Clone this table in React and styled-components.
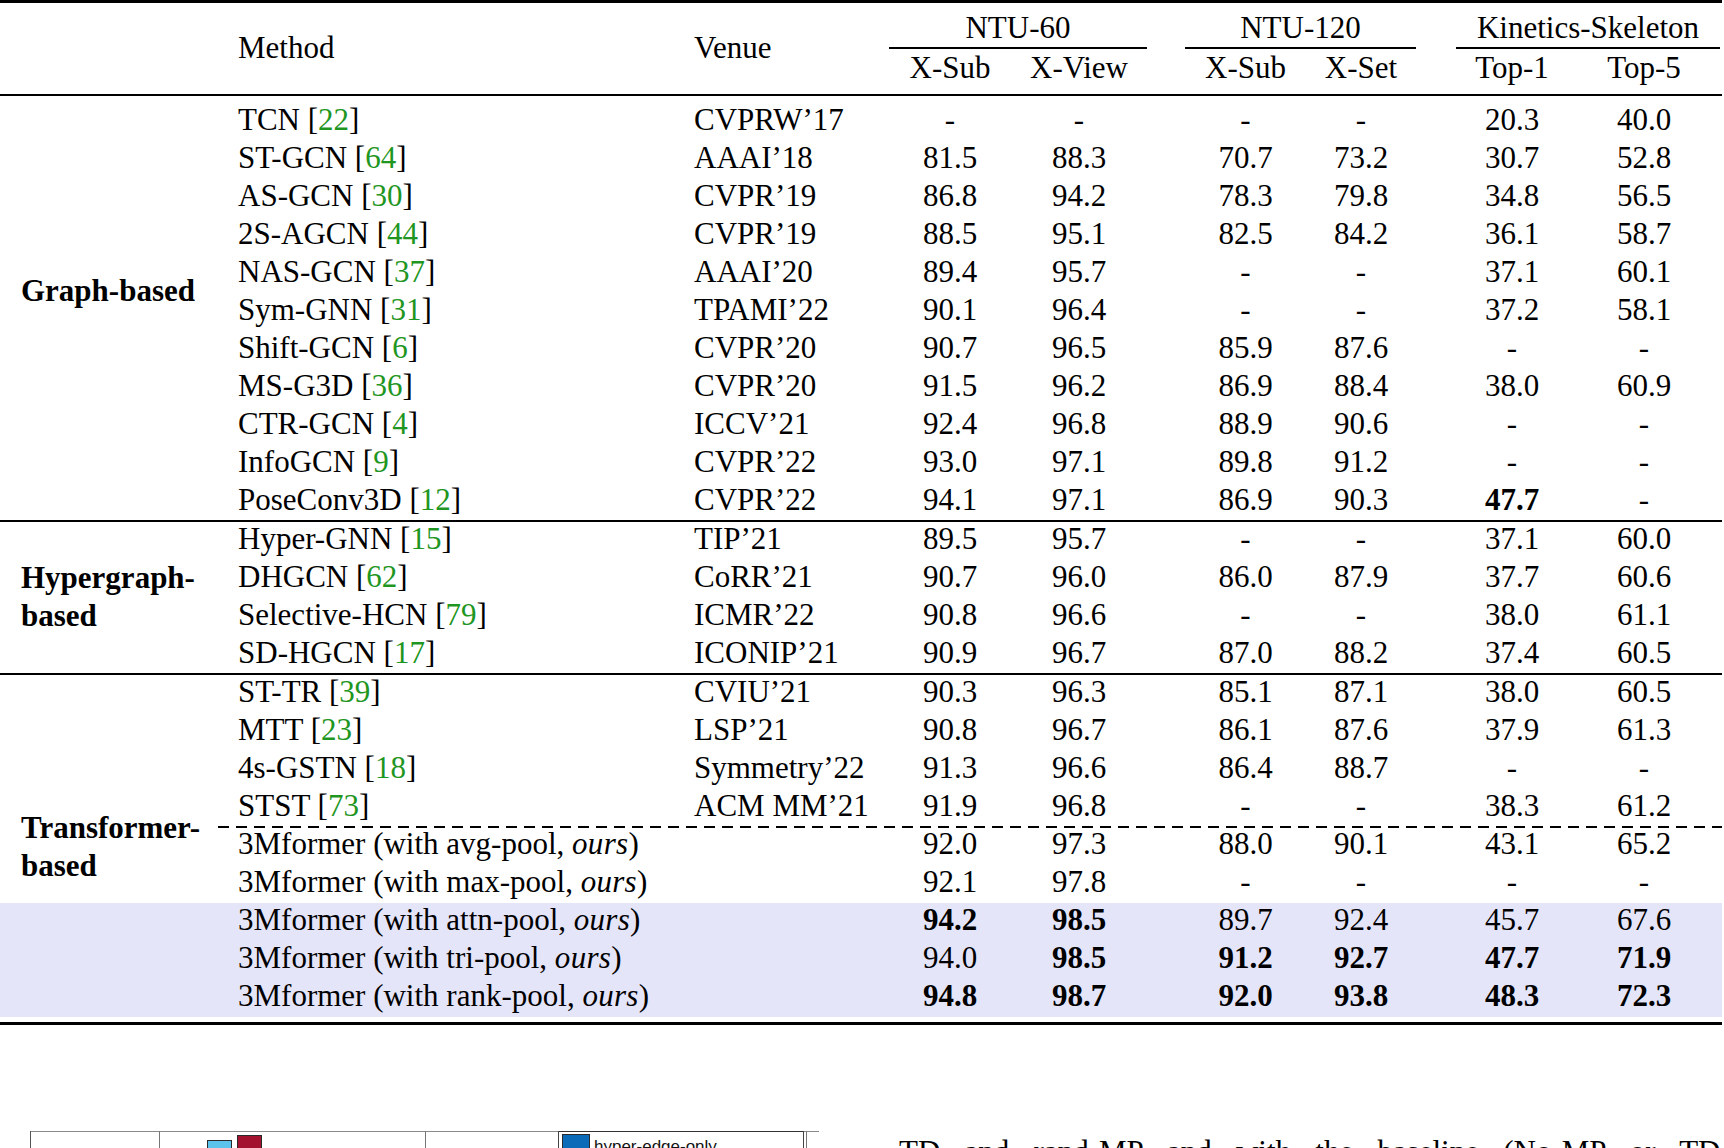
import React from "react"
import styled, { createGlobalStyle } from "styled-components"

// column tracks: group label | method | venue | NTU-60 x2 | gap | NTU-120 x2 | gap | Kinetics x2
const COLS = "238px 456px 195px 122px 136px 38px 121px 110px 40px 112px 152px"
const NUM_COLS = [4, 5, 7, 8, 10, 11]

const GlobalStyle = createGlobalStyle`
  html, body {
    margin: 0;
    padding: 0;
    background: #fff;
    overflow: hidden;
  }
  body {
    font-family: "Liberation Serif", "Times New Roman", serif;
    color: #000;
  }
`

const groups = [
  {
    label: ["Graph-based"],
    labelRows: "5 / 7",
    labelShift: 0,
    rows: [
      { m: "TCN", ref: 22, v: "CVPRW’17", n: ["-", "-", "-", "-", "20.3", "40.0"] },
      { m: "ST-GCN", ref: 64, v: "AAAI’18", n: ["81.5", "88.3", "70.7", "73.2", "30.7", "52.8"] },
      { m: "AS-GCN", ref: 30, v: "CVPR’19", n: ["86.8", "94.2", "78.3", "79.8", "34.8", "56.5"] },
      { m: "2S-AGCN", ref: 44, v: "CVPR’19", n: ["88.5", "95.1", "82.5", "84.2", "36.1", "58.7"] },
      { m: "NAS-GCN", ref: 37, v: "AAAI’20", n: ["89.4", "95.7", "-", "-", "37.1", "60.1"] },
      { m: "Sym-GNN", ref: 31, v: "TPAMI’22", n: ["90.1", "96.4", "-", "-", "37.2", "58.1"] },
      { m: "Shift-GCN", ref: 6, v: "CVPR’20", n: ["90.7", "96.5", "85.9", "87.6", "-", "-"] },
      { m: "MS-G3D", ref: 36, v: "CVPR’20", n: ["91.5", "96.2", "86.9", "88.4", "38.0", "60.9"] },
      { m: "CTR-GCN", ref: 4, v: "ICCV’21", n: ["92.4", "96.8", "88.9", "90.6", "-", "-"] },
      { m: "InfoGCN", ref: 9, v: "CVPR’22", n: ["93.0", "97.1", "89.8", "91.2", "-", "-"] },
      { m: "PoseConv3D", ref: 12, v: "CVPR’22", n: ["94.1", "97.1", "86.9", "90.3", "*47.7", "-"] },
    ],
  },
  {
    label: ["Hypergraph-", "based"],
    labelRows: "1 / 5",
    labelShift: 2,
    rows: [
      { m: "Hyper-GNN", ref: 15, v: "TIP’21", n: ["89.5", "95.7", "-", "-", "37.1", "60.0"] },
      { m: "DHGCN", ref: 62, v: "CoRR’21", n: ["90.7", "96.0", "86.0", "87.9", "37.7", "60.6"] },
      { m: "Selective-HCN", ref: 79, v: "ICMR’22", n: ["90.8", "96.6", "-", "-", "38.0", "61.1"] },
      { m: "SD-HGCN", ref: 17, v: "ICONIP’21", n: ["90.9", "96.7", "87.0", "88.2", "37.4", "60.5"] },
    ],
  },
  {
    label: ["Transformer-", "based"],
    labelRows: "1 / 10",
    labelShift: 5,
    dashRow: 5,
    band: "7 / 10",
    rows: [
      { m: "ST-TR", ref: 39, v: "CVIU’21", n: ["90.3", "96.3", "85.1", "87.1", "38.0", "60.5"] },
      { m: "MTT", ref: 23, v: "LSP’21", n: ["90.8", "96.7", "86.1", "87.6", "37.9", "61.3"] },
      { m: "4s-GSTN", ref: 18, v: "Symmetry’22", n: ["91.3", "96.6", "86.4", "88.7", "-", "-"] },
      { m: "STST", ref: 73, v: "ACM MM’21", n: ["91.9", "96.8", "-", "-", "38.3", "61.2"] },
      { ours: "avg-pool", n: ["92.0", "97.3", "88.0", "90.1", "43.1", "65.2"] },
      { ours: "max-pool", n: ["92.1", "97.8", "-", "-", "-", "-"] },
      { ours: "attn-pool", n: ["*94.2", "*98.5", "89.7", "92.4", "45.7", "67.6"] },
      { ours: "tri-pool", n: ["94.0", "*98.5", "*91.2", "*92.7", "*47.7", "*71.9"] },
      { ours: "rank-pool", n: ["*94.8", "*98.7", "*92.0", "*93.8", "*48.3", "*72.3"] },
    ],
  },
]

const Page = styled.div`
  width: 1724px;
`

const Table = styled.div`
  width: 1722px;
  display: flex;
  flex-direction: column;
  font-size: 31px;
`

const Rule = styled.div`
  height: ${(p) => p.$h}px;
  margin-top: ${(p) => p.$mt || 0}px;
  margin-bottom: ${(p) => p.$mb || 0}px;
  background: #000;
  position: relative;
  z-index: 1;
`

const Header = styled.div`
  display: grid;
  grid-template-columns: ${COLS};
  grid-template-rows: 38px 1.5px 38px;
  padding: 6px 0 7.5px;
  line-height: 38px;
`

const HeadCell = styled.div`
  grid-column: ${(p) => p.$col};
  grid-row: ${(p) => p.$row};
  align-self: center;
  text-align: ${(p) => (p.$center ? "center" : "left")};
  white-space: nowrap;
`

const CMidRule = styled.div`
  grid-column: ${(p) => p.$col};
  grid-row: 2;
  background: #000;
`

const Group = styled.div`
  display: grid;
  grid-template-columns: 1fr;
  grid-auto-rows: 38px;
  padding-top: ${(p) => p.$pt || 0}px;
`

const Band = styled.div`
  grid-column: 1;
  grid-row: ${(p) => p.$rows};
  margin: 2px 0 -2px;
  background: #e5e5fa;
`

const DashLine = styled.div`
  grid-column: 1;
  grid-row: ${(p) => p.$row};
  align-self: start;
  margin: 1.3px 0 0 218px;
  height: 1.4px;
  background: repeating-linear-gradient(to right, #000 0 11px, transparent 11px 18px);
`

const Row = styled.div`
  grid-column: 1;
  grid-row: ${(p) => p.$row};
  display: grid;
  grid-template-columns: ${COLS};
  align-items: center;
  line-height: 38px;
  position: relative;
`

const Cell = styled.div`
  grid-column: ${(p) => p.$col};
  text-align: ${(p) => (p.$center ? "center" : "left")};
  font-weight: ${(p) => (p.$bold ? 700 : 400)};
  white-space: nowrap;
`

const Cite = styled.span`
  color: #1f961f;
`

const Ours = styled.i`
  letter-spacing: 0.3px;
`

const GroupLabel = styled.div`
  grid-column: 1;
  grid-row: ${(p) => p.$rows};
  align-self: center;
  width: 238px;
  box-sizing: border-box;
  padding: ${(p) => p.$shift}px 0 0 21px;
  font-weight: 700;
  line-height: 38px;
  position: relative;
`

const Bottom = styled.div`
  display: flex;
  align-items: flex-start;
  margin-top: 104px;
`

const Figure = styled.div`
  flex: none;
  width: 792px;
  height: 30px;
  margin-left: 28px;
`

const Paragraph = styled.p`
  margin: 0 0 0 79px;
  padding-top: 4px;
  font-size: 31px;
  line-height: 38px;
  white-space: nowrap;
  word-spacing: 16.5px;
`

function Num({ value, col }) {
  const bold = value.startsWith("*")
  return (
    <Cell $col={col} $center $bold={bold}>
      {bold ? value.slice(1) : value}
    </Cell>
  )
}

function DataRow({ row, index }) {
  return (
    <Row $row={index}>
      <Cell $col={2}>
        {row.ours ? (
          <>
            3Mformer (with {row.ours}, <Ours>ours</Ours>)
          </>
        ) : (
          <>
            {row.m} [<Cite>{row.ref}</Cite>]
          </>
        )}
      </Cell>
      {row.v && <Cell $col={3}>{row.v}</Cell>}
      {row.n.map((v, i) => (
        <Num key={i} value={v} col={NUM_COLS[i]} />
      ))}
    </Row>
  )
}

function ChartStrip() {
  return (
    <svg width="792" height="30" viewBox="0 0 792 30">
      <line x1="2" y1="2.5" x2="791" y2="2.5" stroke="#8a8a8a" strokeWidth="1" />
      <line x1="530" y1="2.5" x2="775" y2="2.5" stroke="#333" strokeWidth="1.2" />
      <line x1="2.5" y1="2" x2="2.5" y2="30" stroke="#555" strokeWidth="1" />
      <line x1="131.5" y1="2" x2="131.5" y2="30" stroke="#777" strokeWidth="1" />
      <line x1="397.5" y1="2" x2="397.5" y2="30" stroke="#777" strokeWidth="1" />
      <line x1="530.5" y1="2" x2="530.5" y2="30" stroke="#444" strokeWidth="1" />
      <line x1="775.5" y1="2" x2="775.5" y2="30" stroke="#444" strokeWidth="1" />
      <line x1="778.5" y1="2" x2="778.5" y2="30" stroke="#777" strokeWidth="1" />
      <rect x="179.5" y="11.5" width="24" height="20" fill="#5cc3ec" stroke="#2a2a2a" strokeWidth="1" />
      <rect x="209.5" y="6.5" width="24" height="25" fill="#a3122f" stroke="#2a2a2a" strokeWidth="1" />
      <rect x="534.5" y="5.5" width="27" height="25" fill="#0b6bb8" stroke="#2a2a2a" strokeWidth="1" />
      <text x="566" y="22.5" fontFamily="Liberation Sans, Arial, sans-serif" fontSize="17" fill="#111">
        hyper-edge-only
      </text>
    </svg>
  )
}

export default function App() {
  return (
    <Page>
      <GlobalStyle />
      <Table>
        <Rule $h={3} />
        <Header>
          <HeadCell $col={2} $row="1 / 4">Method</HeadCell>
          <HeadCell $col={3} $row="1 / 4">Venue</HeadCell>
          <HeadCell $col="4 / 6" $row={1} $center>NTU-60</HeadCell>
          <HeadCell $col="7 / 9" $row={1} $center>NTU-120</HeadCell>
          <HeadCell $col="10 / 12" $row={1} $center>Kinetics-Skeleton</HeadCell>
          <CMidRule $col="4 / 6" />
          <CMidRule $col="7 / 9" />
          <CMidRule $col="10 / 12" />
          <HeadCell $col={4} $row={3} $center>X-Sub</HeadCell>
          <HeadCell $col={5} $row={3} $center>X-View</HeadCell>
          <HeadCell $col={7} $row={3} $center>X-Sub</HeadCell>
          <HeadCell $col={8} $row={3} $center>X-Set</HeadCell>
          <HeadCell $col={10} $row={3} $center>Top-1</HeadCell>
          <HeadCell $col={11} $row={3} $center>Top-5</HeadCell>
        </Header>
        <Rule $h={2} />
        {groups.map((g, gi) => (
          <React.Fragment key={gi}>
            {gi > 0 && <Rule $h={1.5} $mt={1} $mb={-1.5} />}
            <Group $pt={gi === 0 ? 5 : 0}>
              {g.band && <Band $rows={g.band} />}
              {g.rows.map((r, i) => (
                <DataRow key={i} row={r} index={i + 1} />
              ))}
              {g.dashRow && <DashLine $row={g.dashRow} />}
              <GroupLabel $rows={g.labelRows} $shift={g.labelShift}>
                {g.label.map((l, i) => (
                  <div key={i}>{l}</div>
                ))}
              </GroupLabel>
            </Group>
          </React.Fragment>
        ))}
        <Rule $h={3} $mt={7} />
      </Table>
      <Bottom>
        <Figure>
          <ChartStrip />
        </Figure>
        <Paragraph>TD and rand-MP and with the baseline (No-MP or TD</Paragraph>
      </Bottom>
    </Page>
  )
}
